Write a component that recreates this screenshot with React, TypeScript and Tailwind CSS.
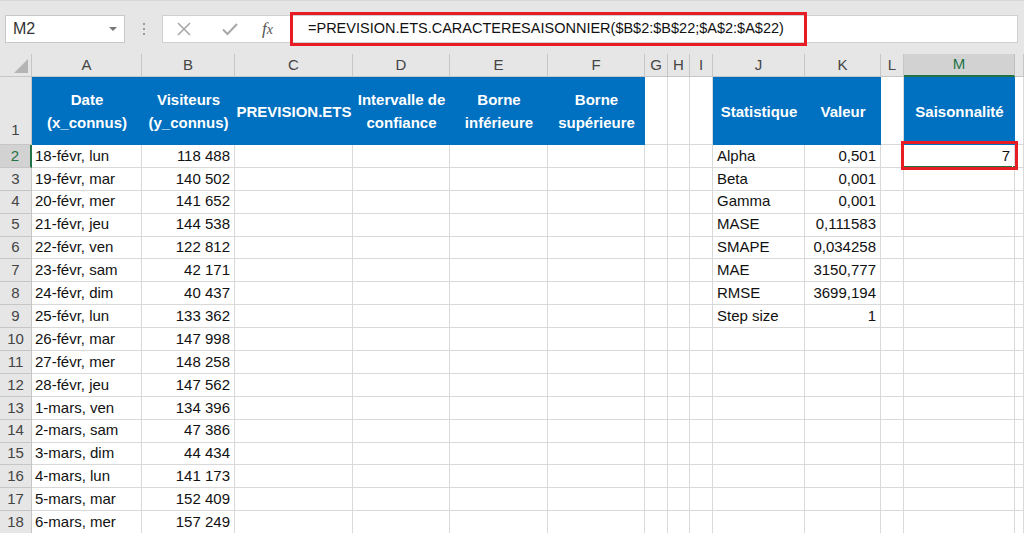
import React from "react";

const rows: [string, string][] = [
  ["18-févr, lun", "118 488"],
  ["19-févr, mar", "140 502"],
  ["20-févr, mer", "141 652"],
  ["21-févr, jeu", "144 538"],
  ["22-févr, ven", "122 812"],
  ["23-févr, sam", "42 171"],
  ["24-févr, dim", "40 437"],
  ["25-févr, lun", "133 362"],
  ["26-févr, mar", "147 998"],
  ["27-févr, mer", "148 258"],
  ["28-févr, jeu", "147 562"],
  ["1-mars, ven", "134 396"],
  ["2-mars, sam", "47 386"],
  ["3-mars, dim", "44 434"],
  ["4-mars, lun", "141 173"],
  ["5-mars, mar", "152 409"],
  ["6-mars, mer", "157 249"],
];

const stats: [string, string][] = [
  ["Alpha", "0,501"],
  ["Beta", "0,001"],
  ["Gamma", "0,001"],
  ["MASE", "0,111583"],
  ["SMAPE", "0,034258"],
  ["MAE", "3150,777"],
  ["RMSE", "3699,194"],
  ["Step size", "1"],
];

const colLetters = ["A", "B", "C", "D", "E", "F", "G", "H", "I", "J", "K", "L", "M", ""];

function Cell({ children, className = "" }: { children?: React.ReactNode; className?: string }) {
  return (
    <div className={`bg-white border-r border-b border-[#d9d9d9] flex items-center overflow-hidden whitespace-nowrap text-[15px] text-[#111] ${className}`}>
      {children}
    </div>
  );
}

function Blue({ children }: { children?: React.ReactNode }) {
  return (
    <div className="bg-[#0070c0] flex items-center justify-center text-center text-white font-bold text-[15px] leading-[23px] whitespace-nowrap">
      {children}
    </div>
  );
}

export default function App() {
  return (
    <div className="w-[1024px] h-[533px] overflow-hidden bg-[#e6e6e6] font-['Liberation_Sans',Arial,sans-serif]">
      {/* formula toolbar */}
      <div className="h-[54px] flex items-start pt-[14px] border-t border-[#d6d6d6]">
        <div className="ml-[5px] w-[120px] h-[28px] bg-white border border-[#c8c8c8] flex items-center justify-between pl-[7px] pr-[7px] text-[16px] text-[#333]">
          <span>M2</span>
          <svg width="8" height="5" viewBox="0 0 8 5"><path d="M0 0h8L4 4z" fill="#777" /></svg>
        </div>
        <div className="w-[37px] h-[28px] flex flex-col items-center justify-center gap-[3px]">
          <span className="w-[2px] h-[2px] bg-[#9a9a9a]" />
          <span className="w-[2px] h-[2px] bg-[#9a9a9a]" />
          <span className="w-[2px] h-[2px] bg-[#9a9a9a]" />
        </div>
        <div className="w-[128px] h-[28px] bg-white border border-[#d0d0d0] border-r-0 flex items-center">
          <svg className="ml-[14px]" width="14" height="14" viewBox="0 0 14 14">
            <path d="M1 1L13 13M13 1L1 13" stroke="#a8a8a8" strokeWidth="1.6" />
          </svg>
          <svg className="ml-[31px]" width="16" height="14" viewBox="0 0 16 14">
            <path d="M1 7.5L5.5 12L15 2" stroke="#a8a8a8" strokeWidth="2" fill="none" />
          </svg>
          <span className="ml-[24px] font-['Liberation_Serif',serif] italic text-[17px] text-[#555]">
            f<span className="text-[14px]">x</span>
          </span>
        </div>
        <div className="relative w-[728px] h-[28px] bg-white border border-[#d0d0d0] flex items-center pl-[17px] text-[14.5px] text-[#111]">
          <span>=PREVISION.ETS.CARACTERESAISONNIER($B$2:$B$22;$A$2:$A$22)</span>
          <div className="absolute left-[-1px] top-[-4px] w-[517px] h-[34px] border-[3px] border-[#e81c24]" />
        </div>
      </div>

      {/* sheet grid */}
      <div className="grid grid-cols-[32px_110px_93px_118px_97px_98px_97px_23px_22px_23px_92px_76px_23px_111px_1fr] grid-rows-[23px_68px_repeat(17,22.9px)]">
        {/* column header row */}
        <div className="relative bg-[#e6e6e6] border-r border-b border-[#c6c6c6]">
          <svg className="absolute right-[3px] bottom-[3px]" width="14" height="14" viewBox="0 0 14 14">
            <path d="M14 0V14H0z" fill="#b4b4b4" />
          </svg>
        </div>
        {colLetters.map((l, i) =>
          l === "M" ? (
            <div key={i} className="bg-[#d2d2d2] border-r border-b-2 border-r-[#bdbdbd] border-b-[#217346] flex items-center justify-center text-[15px] text-[#217346]">
              {l}
            </div>
          ) : (
            <div key={i} className="bg-[#e6e6e6] border-r border-b border-[#c6c6c6] flex items-center justify-center text-[15px] text-[#444]">
              {l}
            </div>
          )
        )}

        {/* row 1 */}
        <div className="bg-[#e6e6e6] border-r border-b border-[#c6c6c6] flex items-end justify-center pb-[3px] text-[15px] text-[#444]">1</div>
        <Blue>Date<br />(x_connus)</Blue>
        <Blue>Visiteurs<br />(y_connus)</Blue>
        <Blue>PREVISION.ETS</Blue>
        <Blue>Intervalle de<br />confiance</Blue>
        <Blue>Borne<br />inférieure</Blue>
        <Blue>Borne<br />supérieure</Blue>
        <Cell />
        <Cell />
        <Cell />
        <Blue>Statistique</Blue>
        <Blue>Valeur</Blue>
        <Cell />
        <Blue>Saisonnalité</Blue>
        <Cell />

        {/* data rows */}
        {rows.map(([d, v], i) => {
          const n = i + 2;
          const st = stats[i];
          return (
            <React.Fragment key={n}>
              {n === 2 ? (
                <div className="bg-[#d2d2d2] border-r-2 border-b border-r-[#217346] border-b-[#c6c6c6] flex items-center justify-center text-[15px] text-[#217346]">{n}</div>
              ) : (
                <div className="bg-[#e6e6e6] border-r border-b border-[#c6c6c6] flex items-center justify-center text-[15px] text-[#444]">{n}</div>
              )}
              <Cell className="pl-[3px]">{d}</Cell>
              <Cell className="justify-end pr-[4px]">{v}</Cell>
              <Cell />
              <Cell />
              <Cell />
              <Cell />
              <Cell />
              <Cell />
              <Cell />
              <Cell className="pl-[4px]">{st ? st[0] : ""}</Cell>
              <Cell className="justify-end pr-[4px]">{st ? st[1] : ""}</Cell>
              <Cell />
              {n === 2 ? (
                <div className="relative bg-white border-r border-b border-[#d9d9d9] flex items-center justify-end pr-[4px] text-[15px] text-[#111]">
                  7
                  <div className="absolute -inset-[1px] border-b-2 border-[#217346]" />
                  <div className="absolute right-[-3px] bottom-[-3px] w-[5px] h-[5px] bg-[#217346] border border-white" />
                  <div className="absolute left-[-3px] right-[-4px] top-[-4px] bottom-[-3px] border-[3px] border-[#e81c24]" />
                </div>
              ) : (
                <Cell />
              )}
              <Cell />
            </React.Fragment>
          );
        })}
      </div>
    </div>
  );
}
